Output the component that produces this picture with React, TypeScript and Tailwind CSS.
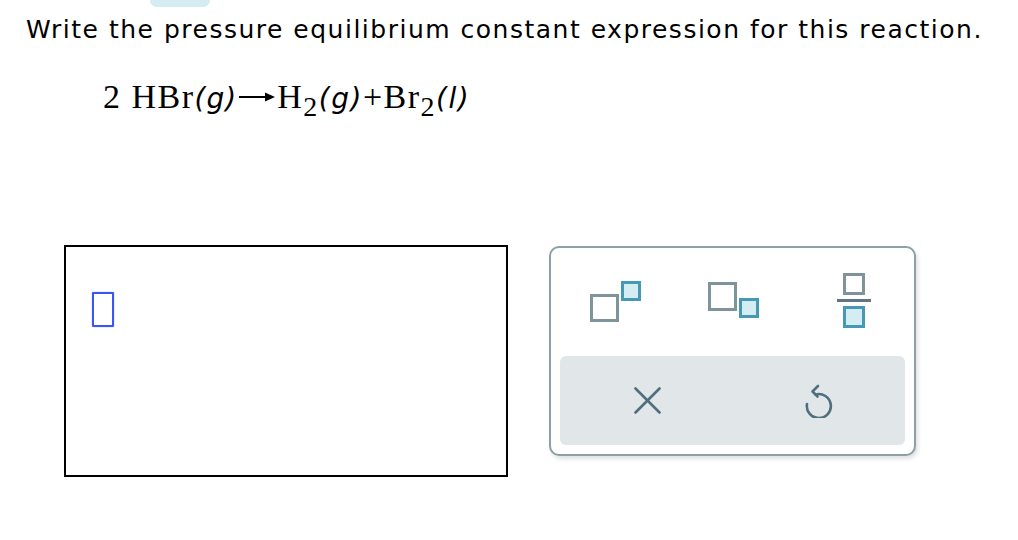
import React from 'react';

const serif = "font-['Liberation_Serif','Times_New_Roman',serif]";
const sansIt = "font-['DejaVu_Sans','Verdana',sans-serif] italic";

function Arrow() {
  return (
    <svg width="36" height="12" viewBox="0 0 36 12" className="mx-[2px] self-center">
      <line x1="0" y1="6" x2="28" y2="6" stroke="#000" strokeWidth="2" />
      <path d="M26 1.5 L36 6 L26 10.5 Z" fill="#000" />
    </svg>
  );
}

function Equation() {
  return (
    <div className={`flex items-baseline text-[34px] leading-none text-black tracking-[1.5px] ${serif}`}>
      <span>2&nbsp;HBr</span>
      <span className={`${sansIt} text-[28px] tracking-[1px]`}>(g)</span>
      <Arrow />
      <span>H</span>
      <sub className="text-[28px] relative top-[8px] align-baseline">2</sub>
      <span className={`${sansIt} text-[28px] tracking-[1.5px]`}>(g)</span>
      <span>+</span>
      <span>Br</span>
      <sub className="text-[28px] relative top-[8px] align-baseline">2</sub>
      <span className={`${sansIt} text-[28px] tracking-[1.5px]`}>(l)</span>
    </div>
  );
}

function UndoIcon() {
  return (
    <svg width="30" height="34" viewBox="0 0 30 34" fill="none" stroke="#4f6f7c" strokeWidth="2.6" strokeLinecap="round" strokeLinejoin="round">
      <path d="M11.5 10.5 A12 12 0 1 1 3 20" />
      <path d="M14 2 L8.5 7.5 L13.5 12.5" />
    </svg>
  );
}

export default function App() {
  return (
    <div className="w-[1018px] h-[540px] bg-white overflow-hidden">
      <div className="ml-[150px] w-[60px] h-[7px] bg-[#d5ecf2] rounded-b-[10px]" />

      <p className="ml-[26px] mt-[9px] text-[25px] leading-[28px] tracking-[1.5px] text-black font-['DejaVu_Sans','Verdana',sans-serif]">
        Write the pressure equilibrium constant expression for this reaction.
      </p>

      <div className="ml-[103px] mt-[36px]">
        <Equation />
      </div>

      <div className="flex items-start mt-[131px]">
        {/* answer box */}
        <div className="ml-[64px] w-[444px] h-[232px] border-2 border-black bg-white">
          <div className="ml-[26px] mt-[45px] w-[22px] h-[35px] border-2 border-[#3a56f7] rounded-[1px] shadow-[0_0_1px_#3a56f7]" />
        </div>

        {/* palette */}
        <div className="ml-[41px] mt-[1px] w-[367px] h-[210px] border-2 border-[#8d9fa7] rounded-[10px] bg-white shadow-[2px_3px_4px_rgba(0,0,0,0.12)] flex flex-col">
          <div className="grid grid-cols-3 h-[104px] items-center">
            <div className="flex justify-center">
              <div className="flex items-start gap-[2px] pl-[7px] mt-[2px]">
                <div className="mt-[13px] w-[29px] h-[28px] border-[3px] border-[#7f939b]" />
                <div className="w-[20px] h-[20px] border-[3px] border-[#4699b4] bg-[#d4edf3]" />
              </div>
            </div>
            <div className="flex justify-center">
              <div className="flex items-start gap-[2px] pl-[2px]">
                <div className="w-[29px] h-[29px] border-[3px] border-[#7f939b]" />
                <div className="mt-[16px] w-[20px] h-[20px] border-[3px] border-[#4699b4] bg-[#d4edf3]" />
              </div>
            </div>
            <div className="flex justify-center">
              <div className="flex flex-col items-center gap-[4px]">
                <div className="w-[22px] h-[22px] border-[3px] border-[#7f939b]" />
                <div className="w-[34px] h-[3px] bg-[#5f7782]" />
                <div className="w-[22px] h-[22px] border-[3px] border-[#4699b4] bg-[#d4edf3]" />
              </div>
            </div>
          </div>

          <div className="mx-[9px] mt-[4px] h-[89px] rounded-[6px] bg-[#e1e6e9] grid grid-cols-2 items-center">
            <div className="flex justify-center pl-[2px]">
              <svg width="27" height="27" viewBox="0 0 27 27" stroke="#4f6f7c" strokeWidth="2.6" strokeLinecap="round">
                <line x1="1.5" y1="1.5" x2="25.5" y2="25.5" />
                <line x1="25.5" y1="1.5" x2="1.5" y2="25.5" />
              </svg>
            </div>
            <div className="flex justify-center">
              <UndoIcon />
            </div>
          </div>
        </div>
      </div>
    </div>
  );
}
